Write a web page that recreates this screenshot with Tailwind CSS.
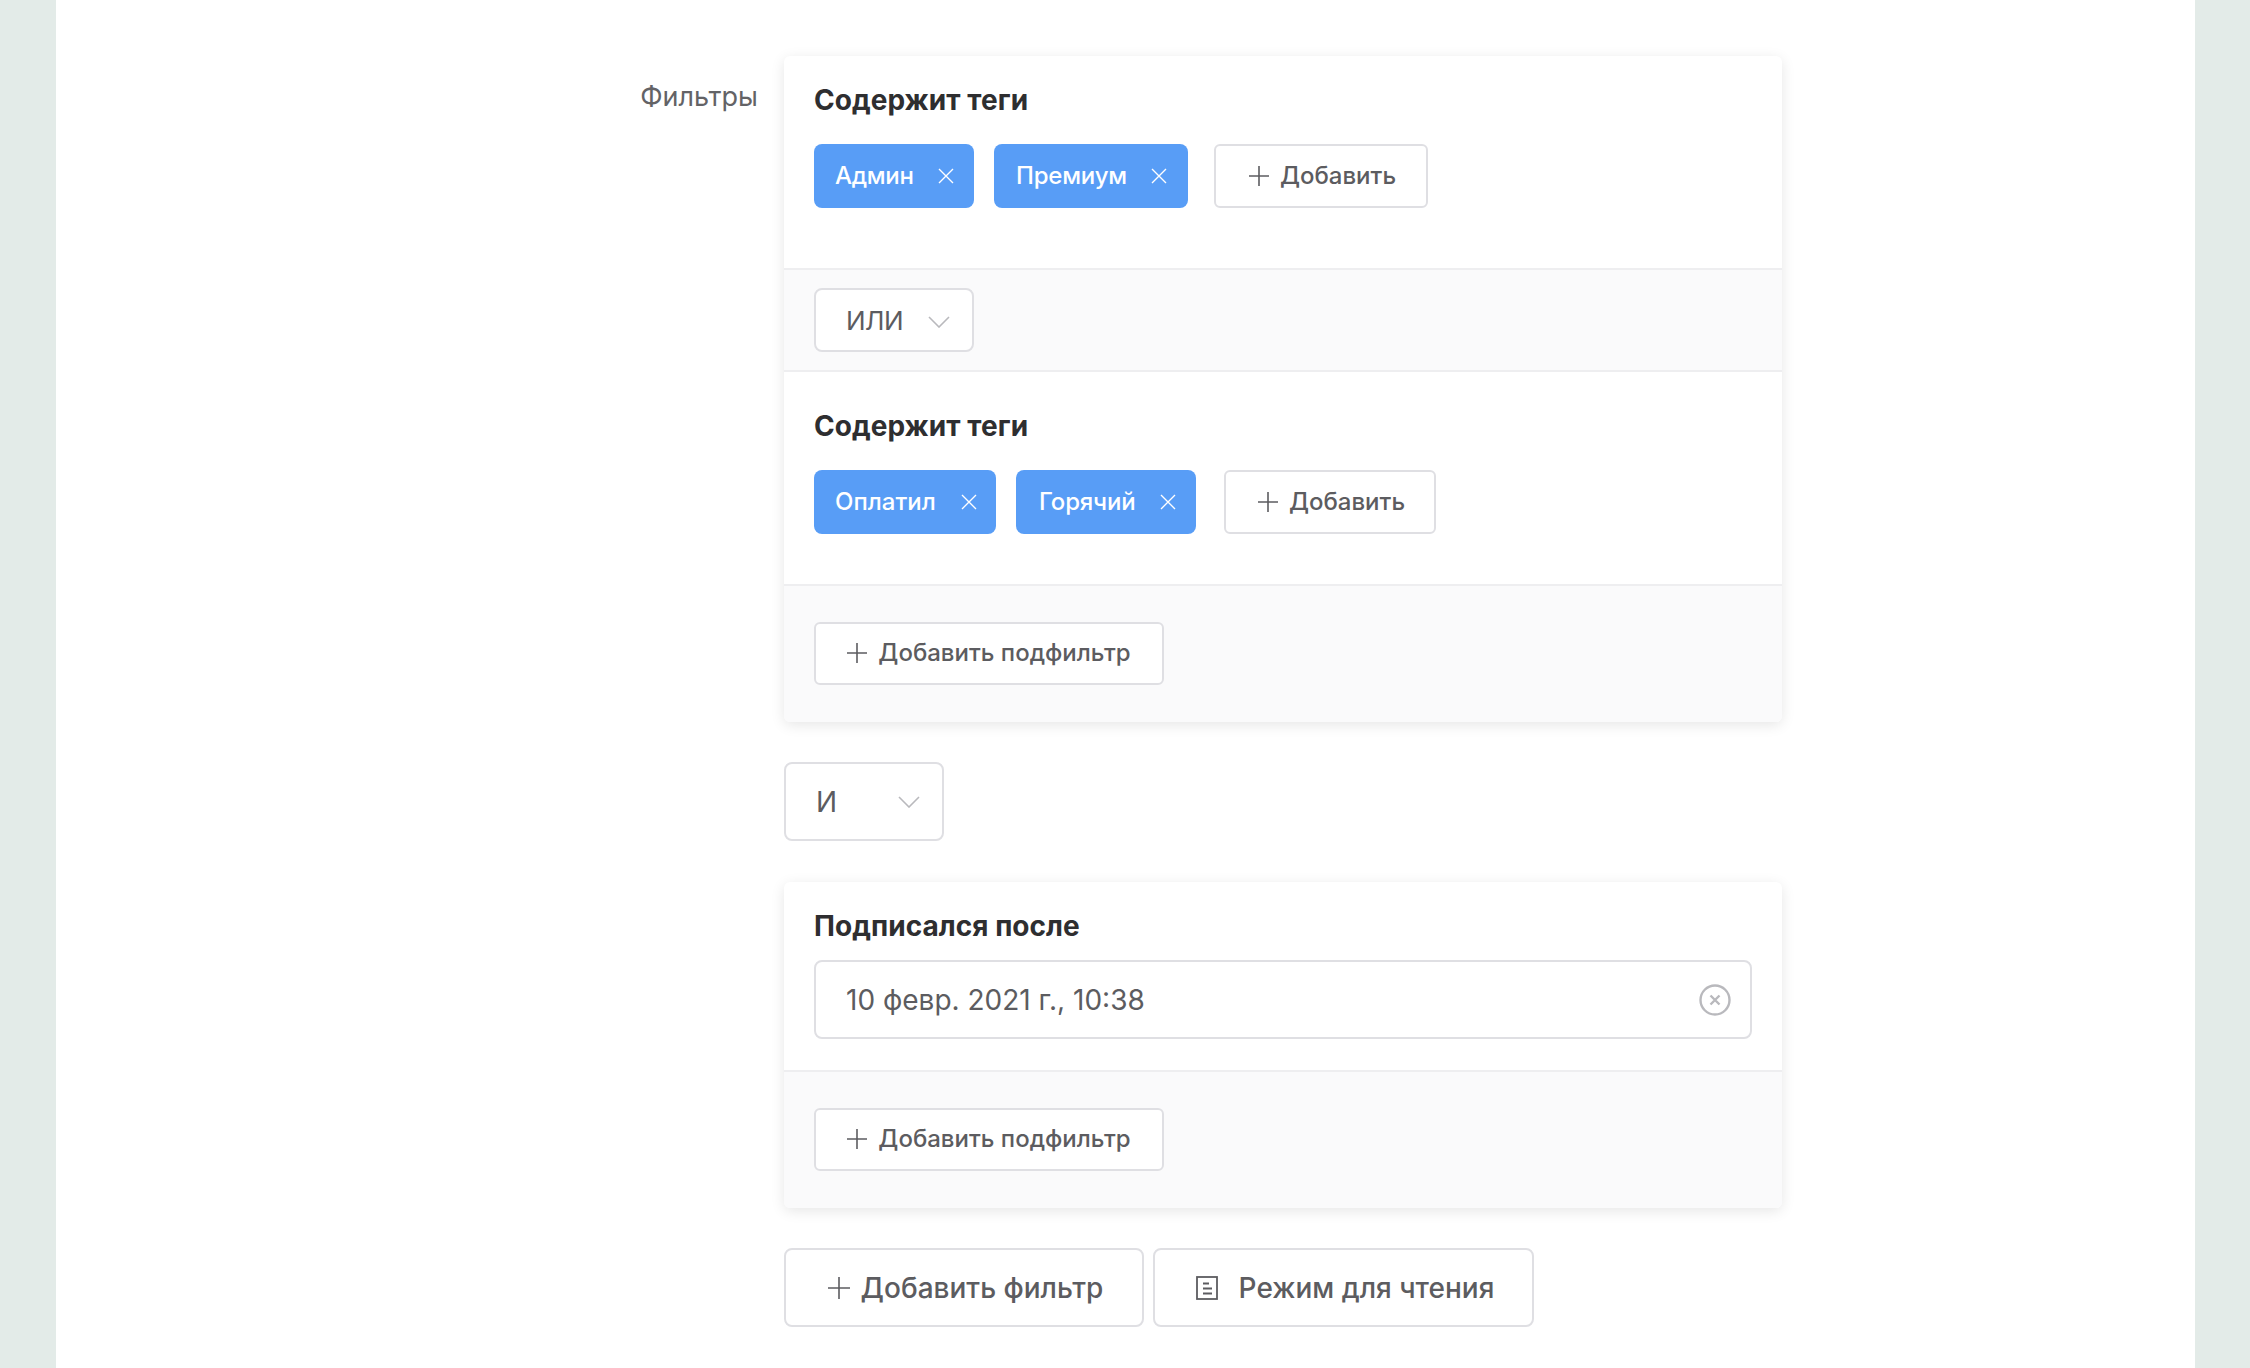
<!DOCTYPE html>
<html lang="ru">
<head>
    <meta charset="UTF-8">
    <title>Фильтры</title>
    <script src="https://cdn.jsdelivr.net/npm/@tailwindcss/browser@4"></script>
</head>
<body class="bg-[#e3ebe8] font-['Inter','Noto_Sans',sans-serif] text-[#5c5c60]">
    <div class="ml-[56px] mr-[55px] h-[1368px] overflow-hidden bg-white">
        <div class="flex pt-[56px]">
            <!-- Label -->
            <div class="w-[728px] pt-[24px] pr-[26px] text-right text-[27px] leading-[34px] text-[#636366]">Фильтры</div>

            <div class="w-[998px]">
                <!-- First filter -->
                <div class="rounded-[6px] bg-white shadow-[0_3px_14px_rgba(0,0,0,0.1)] overflow-hidden">
                    <div class="px-[30px] pt-[27px] pb-[60px]">
                        <h3 class="mb-[27px] text-[28px] leading-[34px] font-bold tracking-[0.05px] text-[#2e2e30]">Содержит теги</h3>
                        <div class="flex items-center">
                            <span class="flex h-[64px] w-[160px] items-center rounded-[8px] bg-[#589df6] pl-[21px] pb-[1px] text-[24px] font-medium tracking-[-0.3px] text-white">Админ
                                <svg class="ml-auto mr-[20px]" width="16" height="16" viewBox="0 0 16 16" fill="none" stroke="currentColor" stroke-width="1.4"><path d="M1 1l14 14M15 1L1 15"/></svg>
                            </span>
                            <span class="ml-[20px] flex h-[64px] w-[194px] items-center rounded-[8px] bg-[#589df6] pl-[22px] pb-[1px] text-[24px] font-medium tracking-[-0.2px] text-white">Премиум
                                <svg class="ml-auto mr-[21px]" width="16" height="16" viewBox="0 0 16 16" fill="none" stroke="currentColor" stroke-width="1.4"><path d="M1 1l14 14M15 1L1 15"/></svg>
                            </span>
                            <button class="ml-[26px] flex h-[64px] w-[214px] items-center justify-center gap-[11px] rounded-[6px] border-2 border-[#dfdfe3] bg-white pb-[1px] pl-[3px] text-[24px] font-medium">
                                <svg width="20" height="20" viewBox="0 0 20 20" stroke="currentColor" stroke-width="1.6"><path d="M10 0v20M0 10h20"/></svg>
                                Добавить
                            </button>
                        </div>
                    </div>
                    <div class="border-y-2 border-[#eeeef0] bg-[#fafafb] px-[30px] py-[18px]">
                        <div class="flex h-[64px] w-[160px] items-center justify-between rounded-[8px] border-2 border-[#dfdfe3] bg-white pl-[30px] pr-[22px] text-[26px] tracking-[-0.5px]">
                            ИЛИ
                            <svg class="mt-[4px]" width="22" height="12" viewBox="0 0 22 12" fill="none" stroke="#b9b9bd" stroke-width="1.6"><path d="M1 1l10 10L21 1"/></svg>
                        </div>
                    </div>
                    <div class="px-[30px] pt-[37px] pb-[50px]">
                        <h3 class="mb-[27px] text-[28px] leading-[34px] font-bold tracking-[0.05px] text-[#2e2e30]">Содержит теги</h3>
                        <div class="flex items-center">
                            <span class="flex h-[64px] w-[182px] items-center rounded-[8px] bg-[#589df6] pl-[21px] pb-[1px] text-[24px] font-medium text-white">Оплатил
                                <svg class="ml-auto mr-[19px]" width="16" height="16" viewBox="0 0 16 16" fill="none" stroke="currentColor" stroke-width="1.4"><path d="M1 1l14 14M15 1L1 15"/></svg>
                            </span>
                            <span class="ml-[20px] flex h-[64px] w-[180px] items-center rounded-[8px] bg-[#589df6] pl-[23px] pb-[1px] text-[24px] font-medium tracking-[-0.2px] text-white">Горячий
                                <svg class="ml-auto mr-[20px]" width="16" height="16" viewBox="0 0 16 16" fill="none" stroke="currentColor" stroke-width="1.4"><path d="M1 1l14 14M15 1L1 15"/></svg>
                            </span>
                            <button class="ml-[28px] flex h-[64px] w-[212px] items-center justify-center gap-[11px] rounded-[6px] border-2 border-[#dfdfe3] bg-white pb-[1px] pl-[3px] text-[24px] font-medium">
                                <svg width="20" height="20" viewBox="0 0 20 20" stroke="currentColor" stroke-width="1.6"><path d="M10 0v20M0 10h20"/></svg>
                                Добавить
                            </button>
                        </div>
                    </div>
                    <div class="border-t-2 border-[#eeeef0] bg-[#fafafb] px-[30px] pt-[36px] pb-[37px]">
                        <button class="flex h-[63px] w-[350px] items-center justify-center gap-[11px] rounded-[6px] border-2 border-[#dfdfe3] bg-white pb-[1px] text-[24px] font-medium">
                            <svg width="20" height="20" viewBox="0 0 20 20" stroke="currentColor" stroke-width="1.6"><path d="M10 0v20M0 10h20"/></svg>
                            Добавить подфильтр
                        </button>
                    </div>
                </div>

                <!-- Operator -->
                <div class="mt-[40px] flex h-[79px] w-[160px] items-center justify-between rounded-[8px] border-2 border-[#dfdfe3] bg-white pl-[30px] pr-[22px] text-[28px]">
                    И
                    <svg width="22" height="12" viewBox="0 0 22 12" fill="none" stroke="#b9b9bd" stroke-width="1.6"><path d="M1 1l10 10L21 1"/></svg>
                </div>

                <!-- Second filter -->
                <div class="mt-[41px] rounded-[6px] bg-white shadow-[0_3px_14px_rgba(0,0,0,0.1)] overflow-hidden">
                    <div class="px-[30px] pt-[27px] pb-[31px]">
                        <h3 class="mb-[17px] text-[28px] leading-[34px] font-bold tracking-[0.05px] text-[#2e2e30]">Подписался после</h3>
                        <div class="flex h-[79px] items-center justify-between rounded-[8px] border-2 border-[#dfdfe3] bg-white pl-[30px] pr-[19px] text-[28px]">
                            10 февр. 2021 г., 10:38
                            <svg width="32" height="32" viewBox="0 0 32 32" fill="none" stroke="#b9b9bd" stroke-width="2.4"><circle cx="16" cy="16" r="14.5"/><path d="M11.5 11.5l9 9M20.500 11.500l-9 9"/></svg>
                        </div>
                    </div>
                    <div class="border-t-2 border-[#eeeef0] bg-[#fafafb] px-[30px] pt-[36px] pb-[37px]">
                        <button class="flex h-[63px] w-[350px] items-center justify-center gap-[11px] rounded-[6px] border-2 border-[#dfdfe3] bg-white pb-[1px] text-[24px] font-medium">
                            <svg width="20" height="20" viewBox="0 0 20 20" stroke="currentColor" stroke-width="1.6"><path d="M10 0v20M0 10h20"/></svg>
                            Добавить подфильтр
                        </button>
                    </div>
                </div>

                <!-- Actions -->
                <div class="mt-[40px] flex gap-[9px]">
                    <button class="flex h-[79px] w-[360px] items-center justify-center gap-[11px] rounded-[8px] border-2 border-[#dfdfe3] bg-white pl-[3px] text-[28px] font-medium">
                        <svg width="22" height="22" viewBox="0 0 22 22" stroke="currentColor" stroke-width="1.6"><path d="M11 0v22M0 11h22"/></svg>
                        Добавить фильтр
                    </button>
                    <button class="flex h-[79px] w-[381px] items-center justify-center gap-[21px] rounded-[8px] border-2 border-[#dfdfe3] bg-white pl-[3px] text-[28px] font-medium">
                        <svg width="22" height="24" viewBox="0 0 22 24" fill="none" stroke="currentColor" stroke-width="1.8"><rect x="1" y="1" width="20" height="22"/><path d="M7 7.500h6M7 12.500h9M7 17.500h9"/></svg>
                        Режим для чтения
                    </button>
                </div>
            </div>
        </div>
    </div>
</body>
</html>
